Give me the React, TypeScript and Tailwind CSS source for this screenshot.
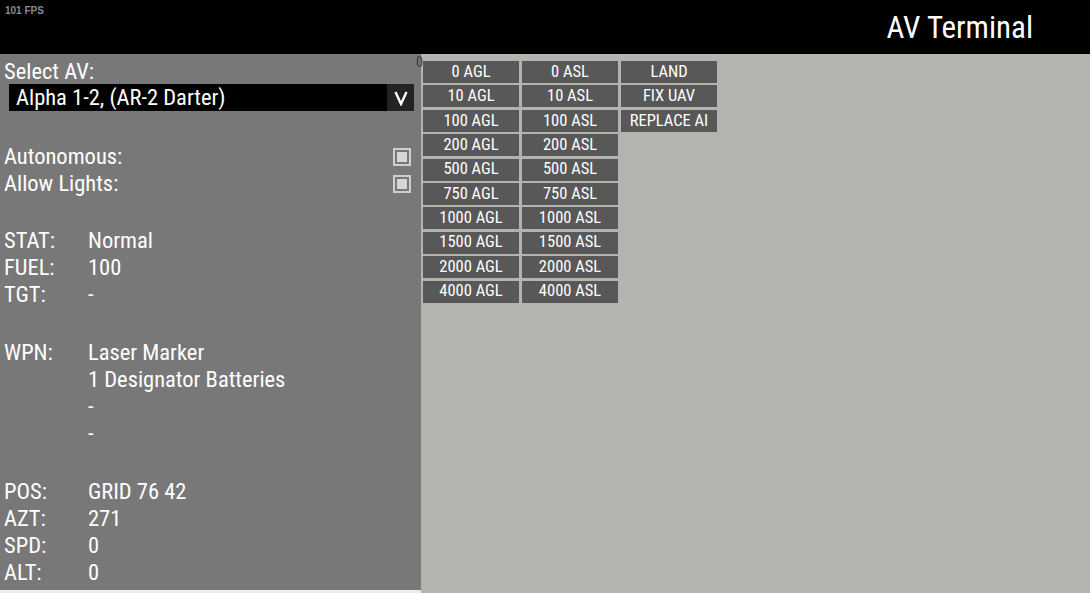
import React from 'react';

const font = { fontFamily: '"Roboto Condensed", "Liberation Sans Narrow", "DejaVu Sans Condensed", Roboto, sans-serif' };

const altitudes = ['0', '10', '100', '200', '500', '750', '1000', '1500', '2000', '4000'];
const actions = ['LAND', 'FIX UAV', 'REPLACE AI'];

function Row({ label, value, className = '' }: { label: string; value?: string; className?: string }) {
  return (
    <div className={`flex h-[27px] items-center ${className}`}>
      <span className="w-[84px]">{label}</span>
      <span>{value}</span>
    </div>
  );
}

function Checkbox() {
  return (
    <div className="flex h-[18px] w-[18px] items-center justify-center border-2 border-[#cfcfcf]">
      <div className="h-[10px] w-[10px] bg-[#d6d6d6]" />
    </div>
  );
}

export default function App() {
  return (
    <div className="flex h-[593px] w-[1090px] flex-col overflow-hidden bg-black" style={font}>
      <div className="relative flex h-[54px] shrink-0 items-center justify-end bg-black pr-[57px]">
        <span className="absolute left-[5px] top-[3px] text-[10px] font-bold text-[#8a8a8a]" style={{ fontFamily: '"Liberation Sans", Arial, sans-serif' }}>
          101 FPS
        </span>
        <span className="text-[31px] leading-none text-white">AV Terminal</span>
      </div>

      <div className="flex flex-1">
        <div className="flex w-[421px] flex-col">
          <div className="flex-1 bg-[#787878] pl-[4px] pt-[5px] text-[22.5px] text-white">
            <div className="flex h-[25px] items-center">Select AV:</div>
            <div className="ml-[5px] flex h-[27px] w-[405px] items-center justify-between bg-black">
              <span className="pl-[7px]">Alpha 1-2, (AR-2 Darter)</span>
              <div className="flex h-[27px] w-[27px] items-center justify-center bg-[#232323]">
                <svg width="14" height="16" viewBox="0 0 14 16">
                  <polyline points="1.5,2 7,14 12.5,2" fill="none" stroke="white" strokeWidth="2.4" />
                </svg>
              </div>
            </div>

            <div className="mt-[32px] flex h-[27px] items-center justify-between pr-[10px]">
              <span>Autonomous:</span>
              <Checkbox />
            </div>
            <div className="flex h-[27px] items-center justify-between pr-[10px]">
              <span>Allow Lights:</span>
              <Checkbox />
            </div>

            <Row label="STAT:" value="Normal" className="mt-[30px]" />
            <Row label="FUEL:" value="100" />
            <Row label="TGT:" value="-" />

            <Row label="WPN:" value="Laser Marker" className="mt-[31px]" />
            <Row label="" value="1 Designator Batteries" />
            <Row label="" value="-" />
            <Row label="" value="-" />

            <Row label="POS:" value="GRID 76 42" className="mt-[31px]" />
            <Row label="AZT:" value="271" />
            <Row label="SPD:" value="0" />
            <Row label="ALT:" value="0" />
          </div>
          <div className="h-[3px] bg-[#ececec]" />
        </div>

        <div className="relative flex-1 bg-[#b3b4b0] pl-[2px] pt-[7px]">
          <span className="absolute left-[-5px] top-[1px] text-[14px] leading-none text-[#3a3a3a]">0</span>
          <div className="grid grid-cols-[96px_96px_96px] gap-x-[3px] gap-y-[2.4px]">
            {altitudes.map((a, i) => (
              <React.Fragment key={a}>
                <button className="h-[22px] bg-[#585858] text-[16.5px] leading-none text-white">{a} AGL</button>
                <button className="h-[22px] bg-[#585858] text-[16.5px] leading-none text-white">{a} ASL</button>
                {actions[i] ? (
                  <button className="h-[22px] bg-[#585858] text-[16.5px] leading-none text-white">{actions[i]}</button>
                ) : (
                  <div />
                )}
              </React.Fragment>
            ))}
          </div>
        </div>
      </div>
    </div>
  );
}
